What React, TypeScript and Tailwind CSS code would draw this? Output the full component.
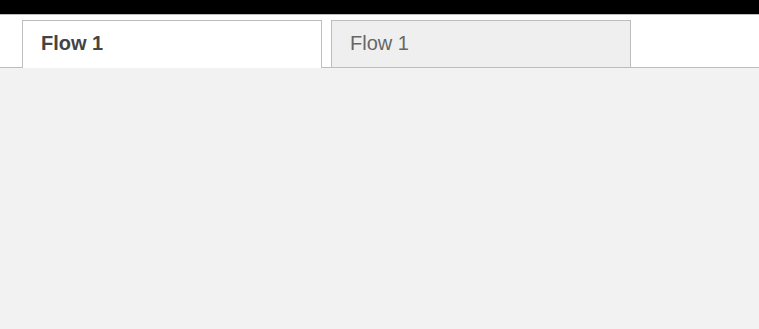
export default function App() {
  return (
    <div className="w-[759px] h-[329px] flex flex-col bg-[#f2f2f2] overflow-hidden" style={{ fontFamily: '"Liberation Sans", Arial, sans-serif' }}>
      <div className="h-[14px] bg-black shrink-0" />
      <div className="shrink-0 bg-white border-t border-b border-[#bdbdbd] h-[54px] flex items-end pl-[22px] gap-[9px]">
        <div className="w-[300px] h-[48px] -mb-px bg-white border border-b-0 border-[#bdbdbd] pl-[18px] pt-[10px] text-[20px] leading-[24px] font-bold text-[#444444]">
          Flow 1
        </div>
        <div className="w-[300px] h-[47px] bg-[#efefef] border border-b-0 border-[#bdbdbd] pl-[18px] pt-[10px] text-[20px] leading-[24px] text-[#666666]">
          Flow 1
        </div>
      </div>
      <div className="flex-1" />
    </div>
  );
}
